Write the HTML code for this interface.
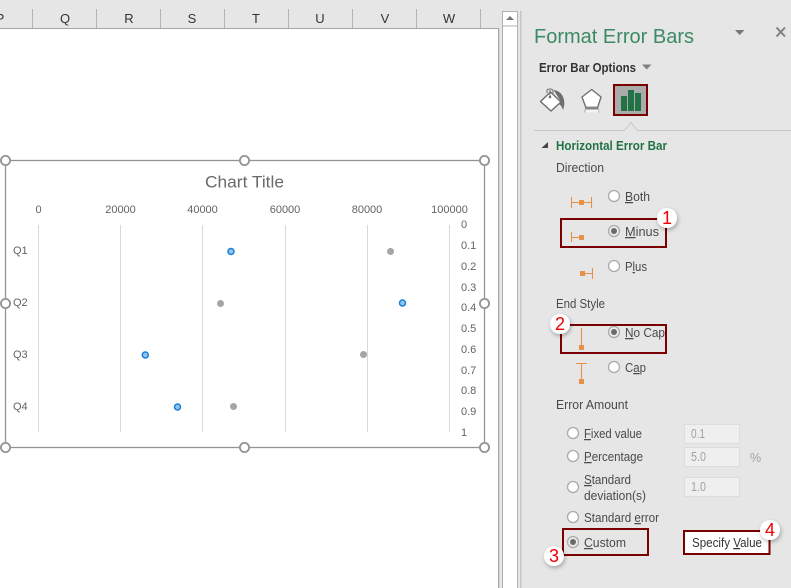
<!DOCTYPE html>
<html><head><meta charset="utf-8">
<style>
html,body{margin:0;padding:0;width:791px;height:588px;overflow:hidden;background:#e6e6e6}
svg{display:block}
text{font-family:"Liberation Sans",sans-serif;font-size:12.5px;fill:#4a4a4a}
.u{text-decoration:underline}
.ax{fill:#636363;font-size:11px}
.dis{fill:#a0a0a0}
.n{font-size:18px;fill:#f00000;text-anchor:middle}
.h{font-size:13px;fill:#333}
</style></head><body>
<svg width="791" height="588" viewBox="0 0 791 588" xmlns="http://www.w3.org/2000/svg">
<defs>
<filter id="sh" x="-50%" y="-50%" width="200%" height="200%"><feDropShadow dx="1" dy="2" stdDeviation="2" flood-color="#000" flood-opacity=".3"/></filter>
</defs>
<rect width="791" height="588" fill="#e6e6e6"/>
<!-- sheet -->
<rect x="0" y="28" width="498" height="560" fill="#fff"/>
<path d="M0 28.5H498.5V588" fill="none" stroke="#a6a6a6"/>
<path d="M499.5 29V588" stroke="#d4d4d4"/>
<path d="M32.5 9V28M96.5 9V28M160.5 9V28M224.5 9V28M288.5 9V28M352.5 9V28M416.5 9V28M480.5 9V28" stroke="#b4b4b4"/>
<g text-anchor="middle">
<text class="h" x="0" y="23">P</text>
<text class="h" x="65" y="23">Q</text>
<text class="h" x="129" y="23">R</text>
<text class="h" x="192" y="23">S</text>
<text class="h" x="256" y="23">T</text>
<text class="h" x="320" y="23">U</text>
<text class="h" x="385" y="23">V</text>
<text class="h" x="449" y="23">W</text>
</g>
<!-- scrollbar -->
<rect x="502.5" y="11.5" width="15" height="577" fill="#fff" stroke="#b0b0b0"/>
<rect x="502.5" y="11.5" width="15" height="14.5" fill="#fff" stroke="#b0b0b0"/>
<path d="M506 20L510 16L514 20Z" fill="#777"/>
<rect x="520" y="11" width="1.500" height="577" fill="#c6c6c6"/>
<!-- chart -->
<rect x="5.500" y="160.500" width="479" height="287" fill="#fff" stroke="#939393" stroke-width="1.300"/>
<path d="M38.500 225V432M120.500 225V432M202.500 225V432M285.500 225V432M367.500 225V432M449.500 225V432" stroke="#d9d9d9"/>
<text x="244.500" y="187.500" text-anchor="middle" textLength="79" lengthAdjust="spacingAndGlyphs" style="font-size:17px;fill:#6a6a6a">Chart Title</text>
<g text-anchor="middle">
<text class="ax" x="38.500" y="213">0</text>
<text class="ax" x="120.500" y="213">20000</text>
<text class="ax" x="202.500" y="213">40000</text>
<text class="ax" x="285" y="213">60000</text>
<text class="ax" x="367" y="213">80000</text>
<text class="ax" x="449.500" y="213">100000</text>
</g>
<text class="ax" x="13" y="254">Q1</text>
<text class="ax" x="13" y="306">Q2</text>
<text class="ax" x="13" y="358">Q3</text>
<text class="ax" x="13" y="410">Q4</text>
<text class="ax" x="461" y="228">0</text>
<text class="ax" x="461" y="249">0.1</text>
<text class="ax" x="461" y="270">0.2</text>
<text class="ax" x="461" y="291">0.3</text>
<text class="ax" x="461" y="311">0.4</text>
<text class="ax" x="461" y="332">0.5</text>
<text class="ax" x="461" y="353">0.6</text>
<text class="ax" x="461" y="374">0.7</text>
<text class="ax" x="461" y="394">0.8</text>
<text class="ax" x="461" y="415">0.9</text>
<text class="ax" x="461" y="436">1</text>
<g fill="#a5a5a5">
<circle cx="390.500" cy="251.500" r="3.500"/><circle cx="220.500" cy="303.500" r="3.500"/><circle cx="363.500" cy="354.500" r="3.500"/><circle cx="233.500" cy="406.500" r="3.500"/>
</g>
<g fill="#8fc6f2" stroke="#1a7fd6" stroke-width="1.500">
<circle cx="231" cy="251.500" r="3"/><circle cx="402.500" cy="303" r="3"/><circle cx="145.300" cy="355" r="3"/><circle cx="177.500" cy="407" r="3"/>
</g>
<g fill="#fff" stroke="#939393" stroke-width="1.800">
<circle cx="5.500" cy="160.500" r="4.600"/><circle cx="244.500" cy="160.500" r="4.600"/><circle cx="484.500" cy="160.500" r="4.600"/>
<circle cx="5.500" cy="303.500" r="4.600"/><circle cx="484.500" cy="303.500" r="4.600"/>
<circle cx="5.500" cy="447.500" r="4.600"/><circle cx="244.500" cy="447.500" r="4.600"/><circle cx="484.500" cy="447.500" r="4.600"/>
</g>
<!-- pane header -->
<text x="534" y="43" textLength="160" lengthAdjust="spacingAndGlyphs" style="font-size:20.500px;fill:#3c8a64">Format Error Bars</text>
<path d="M735 30H744.500L739.700 35Z" fill="#777"/>
<path d="M776.500 27.500L785 36.500M785 27.500L776.500 36.500" stroke="#808080" stroke-width="2" fill="none"/>
<text x="539" y="72" textLength="97" lengthAdjust="spacingAndGlyphs" style="font-size:12.500px;font-weight:bold;fill:#333">Error Bar Options</text>
<path d="M642 64.500H651.500L646.700 69.500Z" fill="#808080"/>
<!-- icons -->
<path d="M553.500 90Q562 91 564 100Q565 105 563 110Q561 104 557 103L560 100Z" fill="#6e6e6e"/>
<path d="M540.500 101.500L550.500 92L561 102L551 111Z" fill="#fff" stroke="#707070" stroke-width="1.500" stroke-linejoin="round"/>
<path d="M547 93V90.500Q547 89 550 89Q553 89 553 91V94M550 90V96" fill="none" stroke="#707070" stroke-width="1"/>
<circle cx="550" cy="97" r="1.300" fill="#707070"/>
<path d="M585.500 107.500L584.800 112.500M598 107.500L599 112.500" stroke="#a8a8a8" stroke-width="1"/>
<rect x="585.500" y="109.500" width="13" height="3" fill="#f4f4f4"/>
<path d="M591.700 89.500L601 97L597.700 107.300H585.800L582 97Z" fill="#fff" stroke="#707070" stroke-width="1.400" stroke-linejoin="round"/>
<rect x="585.500" y="107" width="13" height="2.500" fill="#858585"/>
<rect x="614" y="85" width="33" height="30" fill="#ababab" stroke="#7a0000" stroke-width="2"/>
<rect x="621" y="96" width="6" height="15" fill="#217346"/>
<rect x="628" y="90" width="6" height="21" fill="#217346"/>
<rect x="635" y="93" width="6" height="18" fill="#217346"/>
<path d="M534 130.500H624.500L631 122.500L637.500 130.500H791" fill="#e6e6e6" stroke="#c8c8c8"/>
<path d="M541.500 148L548 148V142Z" fill="#444"/>
<text x="556" y="150" textLength="111" lengthAdjust="spacingAndGlyphs" style="font-size:12.500px;font-weight:bold;fill:#217346">Horizontal Error Bar</text>
<text x="556" y="172" textLength="48" lengthAdjust="spacingAndGlyphs">Direction</text>
<!-- direction glyphs -->
<g stroke="#e59148" stroke-width="1.100" fill="none">
<path d="M571.500 197V208M571.500 202.500H591.500M591.500 197V208"/>
<path d="M571.500 232V242M571.500 237.500H582"/>
<path d="M582 273.500H592.500M592.500 268V279"/>
<path d="M581.500 328V347"/>
<path d="M576 363.500H587M581.500 363.500V379"/>
</g>
<g fill="#e59148">
<rect x="579" y="200" width="5" height="5"/><rect x="579" y="235" width="5" height="5"/><rect x="580" y="271" width="5" height="5"/><rect x="579" y="345" width="5" height="5"/><rect x="579" y="379" width="5" height="5"/>
</g>
<!-- red boxes -->
<g fill="none" stroke="#7a0000" stroke-width="2">
<rect x="561" y="219" width="105" height="28"/>
<rect x="561" y="325" width="105" height="28"/>
<rect x="563" y="529" width="85" height="26"/>
</g>
<!-- radios -->
<g fill="#fff" stroke="#aaaaaa" stroke-width="1.300">
<circle cx="614" cy="196" r="5.500"/><circle cx="614" cy="266" r="5.500"/><circle cx="614" cy="367" r="5.500"/>
<circle cx="573" cy="433" r="5.500"/><circle cx="573" cy="456" r="5.500"/><circle cx="573" cy="487" r="5.500"/><circle cx="573" cy="517" r="5.500"/>
<circle cx="614" cy="231" r="5.500" fill="#ececec"/><circle cx="614" cy="332" r="5.500" fill="#ececec"/><circle cx="573" cy="542" r="5.500" fill="#ececec"/>
</g>
<g fill="#6a6a6a">
<circle cx="614" cy="231" r="3"/><circle cx="614" cy="332" r="3"/><circle cx="573" cy="542" r="3"/>
</g>
<text x="625" y="201" textLength="25" lengthAdjust="spacingAndGlyphs"><tspan class="u">B</tspan>oth</text>
<text x="625" y="236" textLength="34" lengthAdjust="spacingAndGlyphs"><tspan class="u">M</tspan>inus</text>
<text x="625" y="271" textLength="22" lengthAdjust="spacingAndGlyphs">P<tspan class="u">l</tspan>us</text>
<text x="556" y="308" textLength="49" lengthAdjust="spacingAndGlyphs">End Style</text>
<text x="625" y="337" textLength="40" lengthAdjust="spacingAndGlyphs"><tspan class="u">N</tspan>o Cap</text>
<text x="625" y="372" textLength="21" lengthAdjust="spacingAndGlyphs">C<tspan class="u">a</tspan>p</text>
<text x="556" y="409" textLength="72" lengthAdjust="spacingAndGlyphs">Error Amount</text>
<text x="584" y="438" textLength="58" lengthAdjust="spacingAndGlyphs"><tspan class="u">F</tspan>ixed value</text>
<text x="584" y="461" textLength="59" lengthAdjust="spacingAndGlyphs"><tspan class="u">P</tspan>ercentage</text>
<text x="584" y="484" textLength="47" lengthAdjust="spacingAndGlyphs"><tspan class="u">S</tspan>tandard</text>
<text x="584" y="500" textLength="62" lengthAdjust="spacingAndGlyphs">deviation(s)</text>
<text x="584" y="522" textLength="75" lengthAdjust="spacingAndGlyphs">Standard <tspan class="u">e</tspan>rror</text>
<text x="584" y="547" textLength="42" lengthAdjust="spacingAndGlyphs"><tspan class="u">C</tspan>ustom</text>
<!-- inputs -->
<g fill="#efefef" stroke="#dcdcdc">
<rect x="684.500" y="424.500" width="55" height="19"/><rect x="684.500" y="447.500" width="55" height="19"/><rect x="684.500" y="477.500" width="55" height="19"/>
</g>
<text class="dis" x="691" y="438" textLength="14" lengthAdjust="spacingAndGlyphs">0.1</text>
<text class="dis" x="691" y="461" textLength="15" lengthAdjust="spacingAndGlyphs">5.0</text>
<text class="dis" x="691" y="491" textLength="15" lengthAdjust="spacingAndGlyphs">1.0</text>
<text class="dis" x="750" y="462">%</text>
<!-- specify value -->
<rect x="684" y="531" width="85.500" height="23" fill="#fff" stroke="#7a0000" stroke-width="2"/>
<text x="692" y="547" textLength="70" lengthAdjust="spacingAndGlyphs" style="fill:#333">Specify <tspan class="u">V</tspan>alue</text>
<!-- numbered badges -->
<g fill="#fff" filter="url(#sh)">
<circle cx="667" cy="218" r="10"/><circle cx="560" cy="324" r="10"/><circle cx="554" cy="556" r="10"/><circle cx="770" cy="530" r="10"/>
</g>
<text class="n" x="667" y="224">1</text>
<text class="n" x="560" y="330">2</text>
<text class="n" x="554" y="562">3</text>
<text class="n" x="770" y="536">4</text>
</svg>
</body></html>
